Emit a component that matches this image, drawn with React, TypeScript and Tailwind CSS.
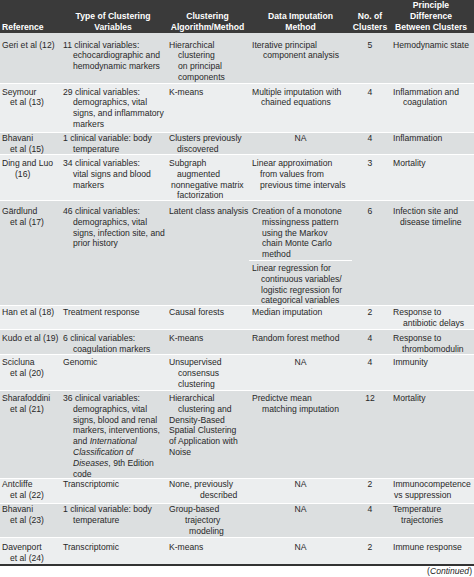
import type { ReactNode } from "react";

type Line = string | [ReactNode, string];
type Cell = { l: Line[]; ind?: string; center?: boolean };
type Row = { h: string; pt: string; bg: string; cells: Cell[] };

const GRAY = "bg-[#dcdfe0]";
const LIGHT = "bg-[#eceeef]";

const cols = "grid grid-cols-[60px_106px_83px_103px_36px_86px]";

const rows: Row[] = [
  {
    h: "h-[50px]", pt: "pt-[6.5px]", bg: GRAY,
    cells: [
      { l: ["Geri et al (12)"] },
      { l: ["11 clinical variables:", "echocardiographic and", "hemodynamic markers"], ind: "ml-[10px]" },
      { l: ["Hierarchical", "clustering", "on principal", "components"] },
      { l: ["Iterative principal", "component analysis"], ind: "ml-[11px]" },
      { l: ["5"], center: true },
      { l: ["Hemodynamic state"] },
    ],
  },
  {
    h: "h-[49px]", pt: "pt-[2.5px]", bg: LIGHT,
    cells: [
      { l: ["Seymour", "et al (13)"], ind: "ml-[8px]" },
      { l: ["29 clinical variables:", "demographics, vital", "signs, and inflammatory", "markers"], ind: "ml-[10px]" },
      { l: ["K-means"] },
      { l: ["Multiple imputation with", "chained equations"] },
      { l: ["4"], center: true },
      { l: ["Inflammation and", "coagulation"], ind: "ml-[10px]" },
    ],
  },
  {
    h: "h-[22px]", pt: "pt-[0px]", bg: GRAY,
    cells: [
      { l: ["Bhavani", "et al (15)"], ind: "ml-[8px]" },
      { l: ["1 clinical variable: body", "temperature"], ind: "ml-[10px]" },
      { l: ["Clusters previously", "discovered"], ind: "ml-[8px]" },
      { l: ["NA"], center: true },
      { l: ["4"], center: true },
      { l: ["Inflammation"] },
    ],
  },
  {
    h: "h-[46px]", pt: "pt-[3px]", bg: LIGHT,
    cells: [
      { l: ["Ding and Luo", "(16)"], ind: "ml-[13px]" },
      { l: ["34 clinical variables:", "vital signs and blood", "markers"], ind: "ml-[10px]" },
      { l: ["Subgraph", "augmented", ["nonnegative matrix", "ml-[2px]"], "factorization"], ind: "ml-[8px]" },
      { l: ["Linear approximation", "from values from", "previous time intervals"], ind: "ml-[8px]" },
      { l: ["3"], center: true },
      { l: ["Mortality"] },
    ],
  },
  {
    h: "h-[105px]", pt: "pt-[5px]", bg: GRAY,
    cells: [
      { l: ["Gärdlund", "et al (17)"], ind: "ml-[8px]" },
      { l: ["46 clinical variables:", "demographics, vital", "signs, infection site, and", "prior history"], ind: "ml-[10px]" },
      { l: ["Latent class analysis"] },
      { l: [] },
      { l: ["6"], center: true },
      { l: ["Infection site and", "disease timeline"], ind: "ml-[7px]" },
    ],
  },
  {
    h: "h-[24px]", pt: "pt-[1.3px]", bg: LIGHT,
    cells: [
      { l: ["Han et al (18)"] },
      { l: ["Treatment response"] },
      { l: ["Causal forests"] },
      { l: ["Median imputation"] },
      { l: ["2"], center: true },
      { l: ["Response to", "antibiotic delays"], ind: "ml-[10px]" },
    ],
  },
  {
    h: "h-[25px]", pt: "pt-[3px]", bg: GRAY,
    cells: [
      { l: ["Kudo et al (19)"] },
      { l: ["6 clinical variables:", "coagulation markers"], ind: "ml-[10px]" },
      { l: ["K-means"] },
      { l: ["Random forest method"] },
      { l: ["4"], center: true },
      { l: ["Response to", "thrombomodulin"], ind: "ml-[9px]" },
    ],
  },
  {
    h: "h-[36px]", pt: "pt-[2.3px]", bg: LIGHT,
    cells: [
      { l: ["Scicluna", "et al (20)"], ind: "ml-[8px]" },
      { l: ["Genomic"] },
      { l: ["Unsupervised", "consensus", "clustering"] },
      { l: ["NA"], center: true },
      { l: ["4"], center: true },
      { l: ["Immunity"] },
    ],
  },
  {
    h: "h-[88px]", pt: "pt-[2px]", bg: GRAY,
    cells: [
      { l: ["Sharafoddini", "et al (21)"], ind: "ml-[8px]" },
      {
        l: [
          "36 clinical variables:",
          "demographics, vital",
          "signs, blood and renal",
          "markers, interventions,",
          <>and <i>International</i></>,
          <i>Classification of</i>,
          <><i>Diseases</i>, 9th Edition</>,
          "code",
        ] as Line[],
        ind: "ml-[10px]",
      },
      {
        l: [
          "Hierarchical",
          "clustering and",
          ["Density-Based", "ml-0"],
          ["Spatial Clustering", "ml-0"],
          ["of Application with", "ml-0"],
          ["Noise", "ml-0"],
        ],
      },
      { l: ["Predictve mean", "matching imputation"], ind: "ml-[10px]" },
      { l: ["12"], center: true },
      { l: ["Mortality"] },
    ],
  },
  {
    h: "h-[25px]", pt: "pt-[0px]", bg: LIGHT,
    cells: [
      { l: ["Antcliffe", "et al (22)"], ind: "ml-[8px]" },
      { l: ["Transcriptomic"] },
      { l: ["None, previously", "described"], ind: "ml-[31px]" },
      { l: ["NA"], center: true },
      { l: ["2"], center: true },
      { l: ["Immunocompetence", "vs suppression"], ind: "ml-[1px]" },
    ],
  },
  {
    h: "h-[34px]", pt: "pt-[0px]", bg: GRAY,
    cells: [
      { l: ["Bhavani", "et al (23)"], ind: "ml-[8px]" },
      { l: ["1 clinical variable: body", "temperature"], ind: "ml-[10px]" },
      { l: ["Group-based", ["trajectory", "ml-[16px]"], ["modeling", "ml-[20px]"]] },
      { l: ["NA"], center: true },
      { l: ["4"], center: true },
      { l: ["Temperature", "trajectories"], ind: "ml-[8px]" },
    ],
  },
  {
    h: "h-[27px]", pt: "pt-[4.3px]", bg: LIGHT,
    cells: [
      { l: ["Davenport", "et al (24)"], ind: "ml-[8px]" },
      { l: ["Transcriptomic"] },
      { l: ["K-means"] },
      { l: ["NA"], center: true },
      { l: ["2"], center: true },
      { l: ["Immune response"] },
    ],
  },
];

const padL = ["pl-[2px]", "pl-[3px]", "pl-[3px]", "pl-[3px]", "pl-0", "pl-[5px]"];

function Lines({ cell }: { cell: Cell }) {
  return (
    <>
      {cell.l.map((line, i) => {
        const [content, cls] = Array.isArray(line) ? line : [line, i === 0 ? "ml-0" : cell.ind ?? "ml-[9px]"];
        return (
          <div key={i} className={`whitespace-nowrap ${cls}`}>
            {content}
          </div>
        );
      })}
    </>
  );
}

export default function App() {
  return (
    <div className="w-[474px] h-[577px] bg-white text-[#282828] text-[8.6px] leading-[10.8px] overflow-hidden" style={{ fontFamily: '"Liberation Sans", Arial, sans-serif' }}>
      {/* header */}
      <div className={`${cols} h-[33px] bg-[#3a3a3a] text-white font-bold text-[8.6px] leading-[11px] items-end`}>
        <div className="pl-[2px]">Reference</div>
        <div className="text-center">Type of Clustering<br />Variables</div>
        <div className="text-center">Clustering<br />Algorithm/Method</div>
        <div className="text-center">Data Imputation<br />Method</div>
        <div className="text-center">No. of<br />Clusters</div>
        <div className="text-center">Principle<br />Difference<br />Between Clusters</div>
      </div>

      {rows.map((row, r) => (
        <div key={r} className={`${cols} ${row.h} ${row.bg} ${r > 0 ? "border-t border-white" : ""}`}>
          {row.cells.map((cell, c) =>
            r === 4 && c === 3 ? (
              <div key={c} className="flex flex-col">
                <div className="pl-[3px] pt-[5px] pb-[0.5px] border-b border-white">
                  <Lines cell={{ l: ["Creation of a monotone", "missingness pattern", "using the Markov", "chain Monte Carlo", "method"], ind: "ml-[10px]" }} />
                </div>
                <div className="pl-[3px] pt-[1.5px]">
                  <Lines cell={{ l: ["Linear regression for", "continuous variables/", "logistic regression for", "categorical variables"] }} />
                </div>
              </div>
            ) : (
              <div key={c} className={`${row.pt} ${cell.center ? "text-center" : padL[c]}`}>
                <Lines cell={cell} />
              </div>
            )
          )}
        </div>
      ))}

      <div className="h-[2px] bg-[#333]" />
      <div className="text-right pr-[2px] leading-[11px] text-[8.6px]">
        (<i>Continued</i>)
      </div>
    </div>
  );
}
